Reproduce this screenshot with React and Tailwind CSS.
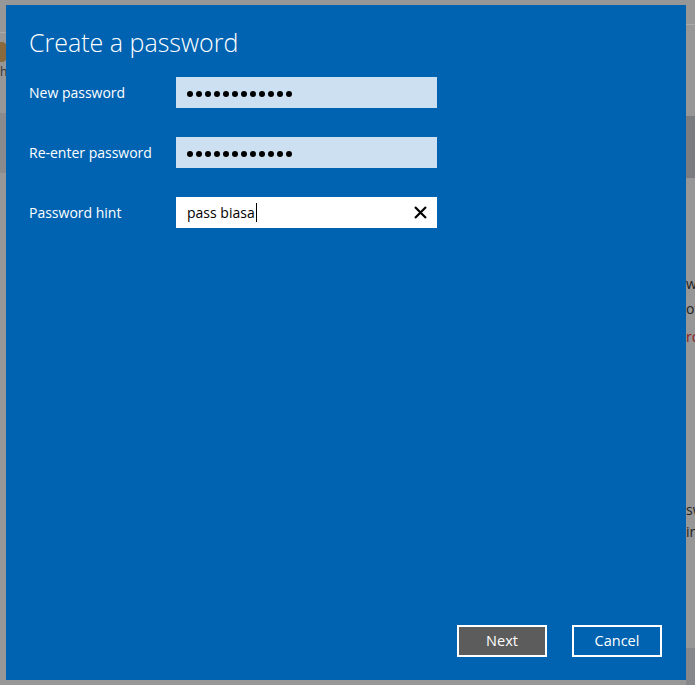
import React from "react";

const font = { fontFamily: '"Open Sans", "Noto Sans", sans-serif' };

function Dots({ count }) {
  return (
    <div className="flex items-center gap-[3px] pt-[3px]">
      {Array.from({ length: count }).map((_, i) => (
        <span key={i} className="w-[6px] h-[6px] rounded-full bg-black" />
      ))}
    </div>
  );
}

function Row({ label, children, white }) {
  return (
    <div className="flex items-center h-[31px]">
      <div className="w-[147px] text-[14px] text-white">{label}</div>
      <div
        className={
          "w-[261px] h-[31px] flex items-center pl-[11px] pr-[9px] " +
          (white ? "bg-white" : "bg-[#cce0f1]")
        }
      >
        {children}
      </div>
    </div>
  );
}

export default function App() {
  return (
    <div className="flex h-[685px] w-[695px] bg-[#979797] overflow-hidden" style={font}>
      {/* left edge of the page behind */}
      <div className="w-[6px] flex flex-col overflow-hidden">
        <div className="h-[33px] border-b border-[#aaaaaa]" />
        <div className="mt-[9px] h-[20px] w-[6px] bg-[#8a6a3c] rounded-r" />
        <div className="mt-[3px] text-[12px] leading-[14px] text-[#333]">h</div>
        <div className="mt-[34px] h-[60px] bg-[#8b8b8e]" />
      </div>

      {/* dialog column */}
      <div className="w-[680px] flex flex-col">
        <div className="h-[5px]" />
        <div className="h-[675px] bg-[#0063b1] flex flex-col pl-[23px] pr-[24px] pt-[19px] pb-[23px]">
          <h1 className="text-[25px] leading-[36px] font-light text-white">Create a password</h1>
          <div className="mt-[17px] flex flex-col gap-[29px]">
            <Row label="New password">
              <Dots count={12} />
            </Row>
            <Row label="Re-enter password">
              <Dots count={12} />
            </Row>
            <Row label="Password hint" white>
              <span className="text-[14px] text-black leading-none">pass biasa</span>
              <span className="w-px h-[19px] bg-black ml-px" />
              <svg className="ml-auto" width="15" height="15" viewBox="0 0 15 15">
                <path d="M2 2 L13 13 M13 2 L2 13" stroke="#000" strokeWidth="2.2" />
              </svg>
            </Row>
          </div>
          <div className="mt-auto flex justify-end gap-[25px]">
            <button className="w-[90px] h-[32px] border-2 border-white bg-[#5c5c5c] text-white text-[14.5px] font-medium">
              Next
            </button>
            <button className="w-[90px] h-[32px] border-2 border-white bg-[#0063b1] text-white text-[14.5px] font-medium">
              Cancel
            </button>
          </div>
        </div>
        <div className="h-[5px]" />
      </div>

      {/* right edge of the page behind */}
      <div className="w-[9px] flex flex-col overflow-hidden text-[14px] text-[#222] whitespace-nowrap">
        <div className="h-[25px] border-b border-[#aaaaaa]" />
        <div className="mt-[91px] h-[62px] bg-[#7b7c80]" />
        <div className="mt-[93px] leading-[25px]">wo</div>
        <div className="leading-[25px]">ot</div>
        <div className="mt-[3px] leading-[25px] text-[#8a1c1c]">ro</div>
        <div className="mt-[150px] leading-[22px]">sw</div>
        <div className="leading-[22px]">in</div>
        <div className="mt-auto h-[37px] bg-[#86878b]" />
      </div>
    </div>
  );
}
